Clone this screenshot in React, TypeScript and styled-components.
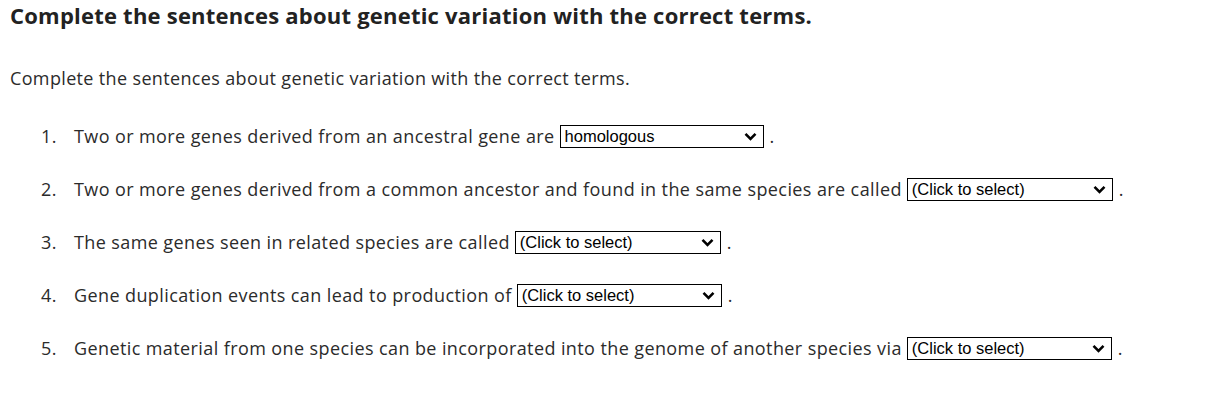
import React from "react";
import styled, { createGlobalStyle } from "styled-components";

const Global = createGlobalStyle`
  html, body { margin: 0; padding: 0; background: #fff; }
  body { font-family: "Open Sans", "Lato", sans-serif; color: #2b2b2b; }
`;

const Page = styled.div`
  padding: 0 10px;
`;

const Title = styled.h2`
  margin: 0;
  padding-top: 1px;
  font-size: 22px;
  line-height: 28px;
  font-weight: 700;
  letter-spacing: 0.22px;
  color: #222;
`;

const Intro = styled.p`
  margin: 37px 0 0 0;
  font-size: 18px;
  line-height: 24px;
  letter-spacing: 0.35px;
`;

const List = styled.ol`
  margin: 31px 0 0 0;
  padding: 0 0 0 64px;
  list-style: none;
  counter-reset: item;
`;

const Item = styled.li`
  counter-increment: item;
  position: relative;
  display: flex;
  align-items: center;
  height: 30px;
  margin-bottom: 23px;
  font-size: 18px;
  letter-spacing: 0.4px;
  &::before {
    content: counter(item) ".";
    position: absolute;
    left: -33px;
  }
`;

const SelectWrap = styled.span<{ $w: number }>`
  position: relative;
  display: inline-flex;
  width: ${(p) => p.$w}px;
  margin-left: 5px;
  margin-right: 6px;
  letter-spacing: 0;
`;

const Select = styled.select`
  appearance: none;
  -webkit-appearance: none;
  width: 100%;
  height: 23px;
  border: 1px solid #000;
  border-radius: 0;
  background: #fff;
  color: #000;
  font-family: "Liberation Sans", Arial, sans-serif;
  font-size: 16.5px;
  padding: 0 20px 0 4px;
  outline: none;
`;

const Chevron = styled.svg`
  position: absolute;
  right: 7px;
  top: 7px;
  pointer-events: none;
`;

const Dot = styled.span``;

const items: { text: string; value: string; w: number }[] = [
  { text: "Two or more genes derived from an ancestral gene are", value: "homologous", w: 204 },
  { text: "Two or more genes derived from a common ancestor and found in the same species are called", value: "(Click to select)", w: 206 },
  { text: "The same genes seen in related species are called", value: "(Click to select)", w: 206 },
  { text: "Gene duplication events can lead to production of", value: "(Click to select)", w: 205 },
  { text: "Genetic material from one species can be incorporated into the genome of another species via", value: "(Click to select)", w: 205 },
];

export default function App() {
  return (
    <Page>
      <Global />
      <Title>Complete the sentences about genetic variation with the correct terms.</Title>
      <Intro>Complete the sentences about genetic variation with the correct terms.</Intro>
      <List>
        {items.map((it, i) => (
          <Item key={i}>
            <span>{it.text}</span>
            <SelectWrap $w={it.w}>
              <Select defaultValue={it.value}>
                <option value={it.value}>{it.value}</option>
              </Select>
              <Chevron width="13" height="9" viewBox="0 0 13 9">
                <path d="M1.5 1.8 L6.5 6.8 L11.5 1.8" fill="none" stroke="#000" strokeWidth="2.6" />
              </Chevron>
            </SelectWrap>
            <Dot>.</Dot>
          </Item>
        ))}
      </List>
    </Page>
  );
}
